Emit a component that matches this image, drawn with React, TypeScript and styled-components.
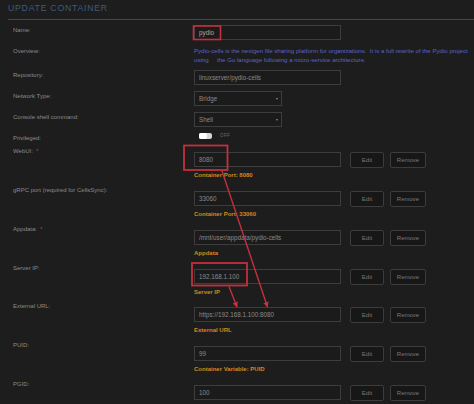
import React from "react";
import styled, { createGlobalStyle } from "styled-components";

const Global = createGlobalStyle`
  html, body {
    margin: 0;
    padding: 0;
    background: #1d1d1d;
  }
  body {
    font-family: "Liberation Sans", Arial, sans-serif;
    overflow: hidden;
  }
`;

const Page = styled.div`
  position: relative;
  width: 474px;
  height: 404px;
  padding: 0 0 0 8px;
  box-sizing: border-box;
  background: #1d1d1d;
`;

const Header = styled.div`
  padding-top: 2px;
  padding-bottom: 5px;
  line-height: 12px;
  font-size: 8.8px;
  letter-spacing: 0.7px;
  color: #3e5a7b;
  border-bottom: 1px solid #474747;
`;

const Section = styled.div<{ $gap: number }>`
  display: flex;
  flex-direction: column;
  gap: ${(p) => p.$gap}px;
`;

const Form = styled.div`
  display: flex;
  flex-direction: column;
  gap: 6px;
  padding-top: 5px;
`;

const Row = styled.div`
  display: grid;
  grid-template-columns: 186px 1fr;
  align-items: start;
`;

const Label = styled.div<{ $raised?: boolean }>`
  padding-left: 5px;
  margin-top: ${(p) => (p.$raised ? -6 : 0)}px;
  font-size: 6px;
  line-height: 10px;
  color: #8b8b8b;
  white-space: nowrap;
`;

const Req = styled.span`
  color: #c43a3a;
  margin-left: 3px;
`;

const Field = styled.div`
  display: flex;
  flex-direction: column;
`;

const Line = styled.div`
  display: flex;
  align-items: flex-start;
`;

const Input = styled.div<{ $w?: number; $light?: boolean }>`
  width: ${(p) => p.$w ?? 147}px;
  height: 15px;
  box-sizing: border-box;
  border: 1px solid #3d3d3d;
  background: #1b1b1b;
  padding-left: 4px;
  display: flex;
  align-items: center;
  font-size: 6.3px;
  color: ${(p) => (p.$light ? "#a8a8a8" : "#8a8a8a")};
  white-space: nowrap;
`;

const SelectBox = styled(Input)`
  justify-content: space-between;
  padding-right: 3px;
`;

const Caret = styled.span`
  width: 0;
  height: 0;
  border-left: 1.5px solid transparent;
  border-right: 1.5px solid transparent;
  border-top: 2px solid #8a8a8a;
`;

const Button = styled.div<{ $w: number }>`
  width: ${(p) => p.$w}px;
  height: 16px;
  margin-bottom: -1px;
  box-sizing: border-box;
  margin-left: ${(p) => (p.$w === 34 ? 9 : 6)}px;
  border: 1px solid #3c3c3c;
  border-radius: 2px;
  background: #171717;
  display: flex;
  align-items: center;
  justify-content: center;
  font-size: 6px;
  color: #7a7a7a;
`;

const Hint = styled.div`
  margin-top: 3px;
  line-height: 10px;
  font-size: 6px;
  font-weight: bold;
  color: #d4891d;
  white-space: nowrap;
`;

const Overview = styled.div`
  font-size: 6.1px;
  line-height: 9px;
  color: #5a63c8;
  white-space: pre;
`;

const ToggleRow = styled.div`
  height: 13px;
  display: flex;
  align-items: flex-start;
  padding-left: 5px;
  gap: 8px;
`;

const Switch = styled.div`
  width: 13px;
  height: 6px;
  border-radius: 2px;
  background: #d6d6d6;
  display: flex;
  justify-content: flex-start;
`;

const Knob = styled.div`
  width: 8px;
  height: 6px;
  border-radius: 2px;
  background: #ffffff;
`;

const Off = styled.span`
  font-size: 4.5px;
  line-height: 6px;
  letter-spacing: 0.4px;
  color: #6f6f6f;
`;

const Overlay = styled.svg`
  position: absolute;
  left: 0;
  top: 0;
  pointer-events: none;
`;

type PortRowProps = {
  label: string;
  value: string;
  hint?: string;
  required?: boolean;
};

function PortRow({ label, value, hint, required }: PortRowProps) {
  return (
    <Row>
      <Label $raised>
        {label}:{required && <Req>*</Req>}
      </Label>
      <Field>
        <Line>
          <Input>{value}</Input>
          <Button $w={34}>Edit</Button>
          <Button $w={36}>Remove</Button>
        </Line>
        {hint && <Hint>{hint}</Hint>}
      </Field>
    </Row>
  );
}

const ports: PortRowProps[] = [
  { label: "WebUI", value: "8080", hint: "Container Port: 8080", required: true },
  { label: "gRPC port (required for CellsSync)", value: "33060", hint: "Container Port: 33060" },
  { label: "Appdata", value: "/mnt/user/appdata/pydio-cells", hint: "Appdata", required: true },
  { label: "Server IP", value: "192.168.1.100", hint: "Server IP" },
  { label: "External URL", value: "https://192.168.1.100:8080", hint: "External URL" },
  { label: "PUID", value: "99", hint: "Container Variable: PUID" },
  { label: "PGID", value: "100" },
];

export default function App() {
  return (
    <>
      <Global />
      <Page>
        <Header>UPDATE CONTAINER</Header>
        <Form>
          <Section $gap={6}>
            <Row>
              <Label>Name:</Label>
              <Input $light>pydio</Input>
            </Row>
            <Row>
              <Label>Overview:</Label>
              <Overview>
                {"Pydio-cells is the nextgen file sharing platform for organizations.  It is a full rewrite of the Pydio project\nusing     the Go language following a micro-service architecture."}
              </Overview>
            </Row>
            <Row>
              <Label>Repository:</Label>
              <Input>linuxserver/pydio-cells</Input>
            </Row>
            <Row>
              <Label>Network Type:</Label>
              <SelectBox $w={88}>
                Bridge
                <Caret />
              </SelectBox>
            </Row>
            <Row>
              <Label>Console shell command:</Label>
              <SelectBox $w={88}>
                Shell
                <Caret />
              </SelectBox>
            </Row>
            <Row>
              <Label>Privileged:</Label>
              <ToggleRow>
                <Switch>
                  <Knob />
                </Switch>
                <Off>OFF</Off>
              </ToggleRow>
            </Row>
          </Section>
          <Section $gap={10.85}>
            {ports.map((p) => (
              <PortRow key={p.label} {...p} />
            ))}
          </Section>
        </Form>
        <Overlay width="474" height="404" viewBox="0 0 474 404">
          <defs>
            <marker id="head" viewBox="0 0 10 10" refX="9" refY="5" markerWidth="4" markerHeight="4" orient="auto">
              <path d="M0 0 L10 5 L0 10 z" fill="#c9303c" />
            </marker>
          </defs>
          <g fill="none" stroke="#c4303c">
            <rect x="193.5" y="26" width="27" height="13.5" strokeWidth="1.6" />
            <rect x="184" y="145.5" width="43.5" height="24.5" strokeWidth="1.8" />
            <rect x="192" y="263" width="55" height="22.5" strokeWidth="1.8" />
            <line x1="222" y1="171" x2="267.5" y2="307" strokeWidth="1.4" markerEnd="url(#head)" />
            <line x1="229" y1="286.5" x2="237" y2="307" strokeWidth="1.4" markerEnd="url(#head)" />
          </g>
        </Overlay>
      </Page>
    </>
  );
}
